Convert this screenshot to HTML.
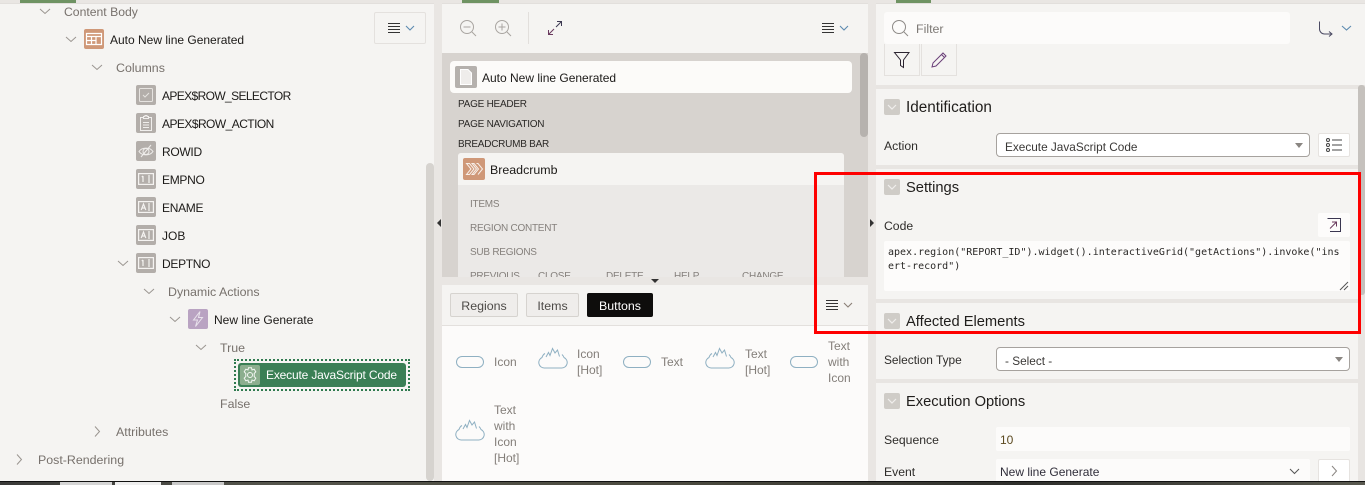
<!DOCTYPE html>
<html><head><meta charset="utf-8"><style>
html,body{margin:0;padding:0;width:1365px;height:485px;overflow:hidden;background:#e9e6e3;font-family:"Liberation Sans",sans-serif;font-size:12px;color:#262626}
div,svg,span.a{position:absolute}
.t{position:absolute;white-space:nowrap;line-height:16px;height:16px}
.g{color:#77716c;font-size:12.4px}
.k{color:#1c1a18}
.u{letter-spacing:-.3px}
.ic{position:absolute;width:20px;height:20px;border-radius:2px;background:#b3aeaa}
.cap{position:absolute;font-size:10px;letter-spacing:-.25px;white-space:nowrap;line-height:14px;color:#2b2927}
.cap2{position:absolute;font-size:10px;letter-spacing:-.25px;white-space:nowrap;line-height:14px;color:#85807c}
.sep{position:absolute;left:876px;width:482px;height:4px;background:#e8e5e2}
.box{position:absolute;width:16px;height:16px;background:#cfccc7;border-radius:2px}
.h{position:absolute;font-size:14.7px;line-height:18px;white-space:nowrap;color:#1f1d1b;left:906px}
.l{position:absolute;left:884px;font-size:12.2px;line-height:16px;white-space:nowrap;color:#2e2c2a}
.sel{position:absolute;background:#fff;border:1px solid #a6a29e;border-radius:4px;box-sizing:border-box;height:24px;font-size:11.8px;line-height:27px;padding-left:8px;color:#3a3836;white-space:nowrap}
.btn{position:absolute;background:#fcfbfa;border-radius:2px}
.gl{position:absolute;font-size:12px;line-height:16px;color:#837e79;white-space:nowrap}
svg{overflow:visible;fill:none}
</style></head><body>

<!-- panels -->
<div style="left:0;top:3px;width:434px;height:478px;background:#f5f4f2;border-top:1px solid #e2dfdc;box-sizing:border-box"></div>
<div style="left:442px;top:3px;width:426px;height:50px;background:#f5f4f2;border-top:1px solid #e2dfdc;box-sizing:border-box"></div>
<div style="left:876px;top:3px;width:489px;height:478px;background:#f5f4f2;border-top:1px solid #e2dfdc;box-sizing:border-box"></div>
<div style="left:20px;top:0;width:56px;height:3px;background:#6f9363"></div>
<div style="left:462px;top:0;width:37px;height:3px;background:#6f9363"></div>
<div style="left:896px;top:0;width:35px;height:3px;background:#6f9363"></div>

<!-- left tree -->
<div style="left:426px;top:163px;width:8px;height:318px;background:#d6d3cf;border-radius:4px"></div>
<svg style="left:436px;top:219px" width="6" height="10"><path d="M5 0V8L1 4Z" fill="#333"/></svg>
<div class="btn" style="left:374px;top:12px;width:52px;height:32px;background:#f5f4f2;border:1px solid #e4e1de;box-sizing:border-box"></div>
<svg style="left:388px;top:23px" width="30" height="11" stroke="#333"><path d="M0 .5H12M0 3.5H12M0 6.5H12M0 9.5H12"/><path d="M18 3l4 4 4-4" stroke="#5d8bb0" stroke-width="1.1"/></svg>

<svg style="left:0;top:0" width="240" height="470" stroke="#9a9590" stroke-width="1">
<path d="M40 9l5 4.500 5-4.500M66 37l5 4.500 5-4.500M92 65l5 4.500 5-4.500M118 261l5 4.500 5-4.500M144 289l5 4.500 5-4.500M170 317l5 4.500 5-4.500M196 345l5 4.500 5-4.500M95 426.500l4.500 5-4.500 5M17 454.500l4.500 5-4.500 5"/>
</svg>
<div class="t g" style="left:64px;top:4px;font-size:12.2px">Content Body</div>
<div class="ic" style="left:84px;top:29px;background:#cf9878"></div>
<svg style="left:86px;top:33px" width="16" height="12" stroke="#fff" stroke-width="1.200"><path d="M.5 .5H15.500V11.500H.5ZM.5 3.500H15.500M.5 7.500H10M5.500 3.500V11.500M10 3.500V11.500"/></svg>
<div class="t k" style="left:110px;top:32px">Auto New line Generated</div>
<div class="t g" style="left:116px;top:60px">Columns</div>

<div class="ic" style="left:136px;top:85px"></div>
<svg style="left:139px;top:88px" width="14" height="14" stroke="#e6e3e0"><rect x=".5" y=".5" width="13" height="13" rx="1"/><path d="M4 7l2 2 4-4"/></svg>
<div class="t k" style="left:162px;top:88px;letter-spacing:-.62px">APEX$ROW_SELECTOR</div>

<div class="ic" style="left:136px;top:113px"></div>
<svg style="left:140px;top:115px" width="12" height="16" stroke="#f0eeec"><path d="M3.500 2.500H.5V15.500H11.500V2.500H8.500M3.500 3.500V1.500H5V.5H7V1.500H8.500V3.500ZM3 7.500H9M3 10H9M3 12.500H9"/></svg>
<div class="t k" style="left:162px;top:116px;letter-spacing:-.55px">APEX$ROW_ACTION</div>

<div class="ic" style="left:136px;top:141px"></div>
<svg style="left:138px;top:144px" width="16" height="14" stroke="#efedeb"><path d="M1 7.500C4 3 12 3 15 7.500 12 12 4 12 1 7.500ZM5 7.500a3 3 0 0 1 6 0 3 3 0 0 1-6 0ZM3 13L13 1"/></svg>
<div class="t k u" style="left:162px;top:144px">ROWID</div>

<div class="ic" style="left:136px;top:169px"></div>
<svg style="left:138px;top:173px" width="16" height="12" stroke="#f5f3f1" stroke-width="1.200"><rect x=".6" y=".6" width="14.800" height="10.800"/><path d="M5 3V9M3.800 4L5 3M11 2V10"/></svg>
<div class="t k u" style="left:162px;top:172px">EMPNO</div>

<div class="ic" style="left:136px;top:197px"></div>
<svg style="left:138px;top:201px" width="16" height="12" stroke="#f5f3f1" stroke-width="1.200"><rect x=".6" y=".6" width="14.800" height="10.800"/><path d="M3.200 9L5.500 3 7.800 9M4.200 7H6.800M11 2V10"/></svg>
<div class="t k u" style="left:162px;top:200px">ENAME</div>

<div class="ic" style="left:136px;top:225px"></div>
<svg style="left:138px;top:229px" width="16" height="12" stroke="#f5f3f1" stroke-width="1.200"><rect x=".6" y=".6" width="14.800" height="10.800"/><path d="M3.200 9L5.500 3 7.800 9M4.200 7H6.800M11 2V10"/></svg>
<div class="t k" style="left:162px;top:228px">JOB</div>

<div class="ic" style="left:136px;top:253px"></div>
<svg style="left:138px;top:257px" width="16" height="12" stroke="#f5f3f1" stroke-width="1.200"><rect x=".6" y=".6" width="14.800" height="10.800"/><path d="M5 3V9M3.800 4L5 3M11 2V10"/></svg>
<div class="t k u" style="left:162px;top:256px">DEPTNO</div>

<div class="t g" style="left:168px;top:284px">Dynamic Actions</div>
<div class="ic" style="left:188px;top:309px;background:#b9a3c2"></div>
<svg style="left:192px;top:311px" width="12" height="16" stroke="#e9e3ec"><path d="M8 .5L1.500 9H5.500L3.500 15.500 10.500 6.500H6.500Z"/></svg>
<div class="t k" style="left:214px;top:312px">New line Generate</div>
<div class="t g" style="left:220px;top:340px">True</div>
<div style="left:234px;top:359px;width:176px;height:32px;box-sizing:border-box;border:2px dotted #2f7a4f"></div>
<div style="left:238px;top:363px;width:168px;height:24px;background:#3a7f55;border-radius:3px"></div>
<div style="left:240px;top:365px;width:20px;height:20px;background:#8cae8e;border-radius:2px"></div>
<svg style="left:242px;top:367px" width="16" height="16" stroke="#f4f7f3"><path d="M6.500 .8H9.500L10 3 12.200 2.200 13.800 4.800 12.200 6.500 12.200 9.500 13.800 11.200 12.200 13.800 10 13 9.500 15.200H6.500L6 13 3.800 13.800 2.200 11.200 3.800 9.500V6.500L2.200 4.800 3.800 2.200 6 3Z"/><circle cx="8" cy="8" r="2.500"/></svg>
<div class="t" style="left:266px;top:367px;color:#fff;letter-spacing:-.17px">Execute JavaScript Code</div>
<div class="t g" style="left:220px;top:396px">False</div>
<div class="t g" style="left:116px;top:424px">Attributes</div>
<div class="t g" style="left:38px;top:452px;font-size:12.4px">Post-Rendering</div>

<!-- middle toolbar -->
<svg style="left:460px;top:20px" width="120" height="18" stroke="#a9a5a1" stroke-width="1"><circle cx="7" cy="7" r="6.500"/><path d="M3.500 7H10.500M12 12L16 16"/><circle cx="42" cy="7" r="6.500"/><path d="M38.500 7H45.500M42 3.500V10.500M47 12L51 16"/></svg>
<div style="left:528px;top:12px;width:1px;height:32px;background:#e2dfdc"></div>
<svg style="left:548px;top:21px" width="14" height="14"><path d="M8 6L13 1M9 .5H13.500V5" stroke="#3d3a52"/><path d="M6 8L1 13M.5 9V13.500H5" stroke="#6a3a5e"/></svg>
<svg style="left:822px;top:23px" width="30" height="11" stroke="#333"><path d="M0 .5H12M0 3.500H12M0 6.500H12M0 9.500H12"/><path d="M18 3l4 4 4-4" stroke="#5d8bb0" stroke-width="1.100"/></svg>

<!-- canvas -->
<div style="left:442px;top:53px;width:426px;height:224px;background:#d7d3cf;overflow:hidden">
  <div style="left:418px;top:0;width:8px;height:84px;background:#b6b2ae;border-radius:4px"></div>
  <div style="left:8px;top:8px;width:402px;height:32px;background:#fcfbf9;border-radius:4px"></div>
  <div style="left:13px;top:13px;width:22px;height:22px;background:#b5b1ad;border-radius:2px"></div>
  <svg style="left:18px;top:16px" width="12" height="16"><path d="M.5 .5H8L11.500 4V15.500H.5Z" fill="#efedeb" stroke="#fff"/></svg>
  <div class="t k" style="left:40px;top:17px">Auto New line Generated</div>
  <div class="cap" style="left:16px;top:45px">PAGE HEADER</div>
  <div class="cap" style="left:16px;top:65px">PAGE NAVIGATION</div>
  <div class="cap" style="left:16px;top:85px">BREADCRUMB BAR</div>
  <div style="left:16px;top:100px;width:386px;height:130px;background:#ebe9e7;border-radius:3px"></div>
  <div style="left:16px;top:100px;width:386px;height:32px;background:#f5f4f2;border-radius:3px 3px 0 0"></div>
  <div style="left:21px;top:105px;width:22px;height:22px;background:#cf9878;border-radius:2px"></div>
  <svg style="left:24px;top:110px" width="17" height="12" stroke="#f7efe9"><path d="M.5 .5H3.500L8 6 3.500 11.500H.5L5 6ZM6 .5H8L12.500 6 8 11.500H6L10.500 6ZM10.500 .5H12L16.500 6 12 11.500"/></svg>
  <div class="t k" style="left:48px;top:109px;font-size:12.4px">Breadcrumb</div>
  <div class="cap2" style="left:28px;top:145px">ITEMS</div>
  <div class="cap2" style="left:28px;top:169px">REGION CONTENT</div>
  <div class="cap2" style="left:28px;top:193px">SUB REGIONS</div>
  <div class="cap2" style="left:28px;top:217px">PREVIOUS</div>
  <div class="cap2" style="left:96px;top:217px">CLOSE</div>
  <div class="cap2" style="left:164px;top:217px">DELETE</div>
  <div class="cap2" style="left:232px;top:217px">HELP</div>
  <div class="cap2" style="left:300px;top:217px">CHANGE</div>
</div>
<svg style="left:651px;top:279px" width="10" height="6"><path d="M0 0H8L4 4Z" fill="#333"/></svg>
<svg style="left:869px;top:219px" width="6" height="10"><path d="M1 0V8L5 4Z" fill="#333"/></svg>

<!-- gallery -->
<div style="left:442px;top:285px;width:426px;height:41px;background:#f5f4f2;border-bottom:1px solid #e3e0dd;box-sizing:border-box"></div>
<div style="left:442px;top:326px;width:426px;height:155px;background:#fcfbfa"></div>
<div style="left:450px;top:293px;width:68px;height:24px;box-sizing:border-box;border:1px solid #d6d3cf;border-radius:2px;background:#efedeb;text-align:center;line-height:24px;color:#4d4a47;font-size:12.4px">Regions</div>
<div style="left:526px;top:293px;width:53px;height:24px;box-sizing:border-box;border:1px solid #d6d3cf;border-radius:2px;background:#efedeb;text-align:center;line-height:24px;color:#4d4a47;font-size:12.4px">Items</div>
<div style="left:587px;top:293px;width:66px;height:24px;border-radius:2px;background:#0e0d0c;text-align:center;line-height:27px;color:#fff;font-size:12.4px">Buttons</div>
<svg style="left:826px;top:300px" width="30" height="11" stroke="#333"><path d="M0 .5H12M0 3.500H12M0 6.500H12M0 9.500H12"/><path d="M18 3l4 4 4-4" stroke="#8a7f76" stroke-width="1.100"/></svg>

<svg style="left:456px;top:350px" width="400" height="110" stroke="#8fb0c2" stroke-width="1">
<rect x=".5" y="6.500" width="27" height="11" rx="5.500"/>
<rect x="167.500" y="6.500" width="27" height="11" rx="5.500"/>
<rect x="334.500" y="6.500" width="27" height="11" rx="5.500"/>
<g><path d="M88.500 18H105.500A5.500 5.500 0 0 0 108 7.500Q107.500 6 106 4.500M88.500 18A5.500 5.500 0 0 1 86 7.500Q87 4.500 89 3.500"/><path d="M90 7L92.500 2.500 94 5.500 96.500 -1.500 99 3 101.500 0 103.500 6.500"/></g>
<g transform="translate(167 0)"><path d="M88.500 18H105.500A5.500 5.500 0 0 0 108 7.500Q107.500 6 106 4.500M88.500 18A5.500 5.500 0 0 1 86 7.500Q87 4.500 89 3.500"/><path d="M90 7L92.500 2.500 94 5.500 96.500 -1.500 99 3 101.500 0 103.500 6.500"/></g>
<g transform="translate(-83 72)"><path d="M88.500 18H105.500A5.500 5.500 0 0 0 108 7.500Q107.500 6 106 4.500M88.500 18A5.500 5.500 0 0 1 86 7.500Q87 4.500 89 3.500"/><path d="M90 7L92.500 2.500 94 5.500 96.500 -1.500 99 3 101.500 0 103.500 6.500"/></g>
</svg>
<div class="gl" style="left:494px;top:354px">Icon</div>
<div class="gl" style="left:577px;top:346px">Icon<br>[Hot]</div>
<div class="gl" style="left:661px;top:354px">Text</div>
<div class="gl" style="left:745px;top:346px">Text<br>[Hot]</div>
<div class="gl" style="left:828px;top:338px">Text<br>with<br>Icon</div>
<div class="gl" style="left:494px;top:402px">Text<br>with<br>Icon<br>[Hot]</div>

<!-- right panel -->
<div class="btn" style="left:884px;top:12px;width:406px;height:32px;border-radius:3px"></div>
<svg style="left:892px;top:20px" width="18" height="18" stroke="#8d8a87"><circle cx="7" cy="7" r="6.500"/><path d="M12 12L16 16"/></svg>
<div class="t" style="left:916px;top:21px;color:#7d7975;font-size:12.4px">Filter</div>
<svg style="left:1319px;top:21px" width="36" height="15"><path d="M.5 .5V8a5 5 0 0 0 5 5H13M10 10.500L13 13 10 15.500" stroke="#4b4a63"/><path d="M23 5l4.500 4 4.500-4" stroke="#5d8bb0" stroke-width="1.100"/></svg>
<div style="left:884px;top:44px;width:36px;height:32px;box-sizing:border-box;border:1px solid #e4e1de;border-top:0"></div>
<div style="left:921px;top:44px;width:36px;height:32px;box-sizing:border-box;border:1px solid #e4e1de;border-top:0"></div>
<svg style="left:894px;top:52px" width="16" height="16"><path d="M.5 .5H15L9.500 8V15.500L6.500 13.500V8Z" stroke="#2b2430"/></svg>
<svg style="left:931px;top:52px" width="16" height="16"><path d="M1 15L2 11 12 1 15 4 5 14ZM10.500 2.500L13.500 5.500" stroke="#6a3f78"/></svg>

<div class="sep" style="top:85px"></div>
<div class="sep" style="top:165px"></div>
<div class="sep" style="top:299px"></div>
<div class="sep" style="top:379px"></div>
<div style="left:1358px;top:85px;width:7px;height:396px;background:#e8e5e2"></div>
<div style="left:1358px;top:85px;width:7px;height:210px;background:#c5c1bd;border-radius:3px"></div>

<div class="box" style="left:884px;top:99px"></div>
<div class="box" style="left:884px;top:179px"></div>
<div class="box" style="left:884px;top:313px"></div>
<div class="box" style="left:884px;top:393px"></div>
<svg style="left:884px;top:99px" width="16" height="310" stroke="#f0eeec" stroke-width="1.200"><path d="M4 6l4 4 4-4M4 86l4 4 4-4M4 220l4 4 4-4M4 300l4 4 4-4"/></svg>
<div class="h" style="top:99px;font-size:15.3px">Identification</div>
<div class="h" style="top:179px">Settings</div>
<div class="h" style="top:313px">Affected Elements</div>
<div class="h" style="top:393px">Execution Options</div>

<div class="l" style="top:138px">Action</div>
<div class="sel" style="left:996px;top:133px;width:314px">Execute JavaScript Code</div>
<svg style="left:1295px;top:143px" width="10" height="6"><path d="M0 0H8L4 5Z" fill="#8a8682"/></svg>
<div class="btn" style="left:1318px;top:133px;width:32px;height:24px;background:#fff;border:1px solid #e6e3e0;box-sizing:border-box"></div>
<svg style="left:1326px;top:138px" width="18" height="14" stroke="#444"><circle cx="2" cy="2" r="1.500"/><circle cx="2" cy="7" r="1.500"/><circle cx="2" cy="12" r="1.500"/><path d="M6 2H16M6 7H16M6 12H16"/></svg>

<div class="l" style="top:218px">Code</div>
<div class="btn" style="left:1318px;top:213px;width:32px;height:24px;background:#fdfcfb"></div>
<svg style="left:1327px;top:218px" width="14" height="14"><path d="M.5 .5H13.500V13.500H3" stroke="#3a3650"/><path d="M3 10.500L9 4.500M5 4H9.500V8.500" stroke="#6a3a5e"/></svg>
<div style="left:884px;top:241px;width:466px;height:50px;background:#fdfcfb;border-radius:2px"></div>
<div style="left:888px;top:246px;font-family:'DejaVu Sans Mono','Liberation Mono',monospace;font-size:10px;line-height:14px;color:#2a2826;white-space:pre">apex.region("REPORT_ID").widget().interactiveGrid("getActions").invoke("ins
ert-record")</div>
<svg style="left:1340px;top:282px" width="9" height="9" stroke="#555"><path d="M0 8L8 0M4 8L8 4"/></svg>

<div class="l" style="top:352px;font-size:11.9px">Selection Type</div>
<div class="sel" style="left:996px;top:347px;width:354px">- Select -</div>
<svg style="left:1335px;top:357px" width="10" height="6"><path d="M0 0H8L4 5Z" fill="#8a8682"/></svg>

<div class="l" style="top:432px">Sequence</div>
<div class="btn" style="left:996px;top:427px;width:354px;height:24px;line-height:27px;padding-left:4px;box-sizing:border-box;color:#5c4a20">10</div>
<div class="l" style="top:464px">Event</div>
<div class="btn" style="left:996px;top:459px;width:314px;height:24px;line-height:26px;padding-left:4px;box-sizing:border-box;color:#302e3a">New line Generate</div>
<svg style="left:1289px;top:468px" width="12" height="7"><path d="M1 1l4.500 4.500L10 1" stroke="#555"/></svg>
<div class="btn" style="left:1318px;top:459px;width:32px;height:24px;background:#fff;border:1px solid #e6e3e0;box-sizing:border-box"></div>
<svg style="left:1331px;top:465px" width="7" height="12"><path d="M1 1l4.500 5L1 11" stroke="#8a8682"/></svg>

<!-- red highlight -->
<div style="left:814px;top:172px;width:547px;height:162px;box-sizing:border-box;border:3px solid #fe0000"></div>

<!-- taskbar strip -->
<div style="left:0;top:481px;width:1365px;height:4px;background:linear-gradient(90deg,#3a3a38,#55554c 20%,#4b4a3f 50%,#2f2f2c 75%,#59594f);border-top:1px solid #111;box-sizing:border-box"></div>
<div style="left:60px;top:482px;width:52px;height:3px;background:#d5d5d5"></div>
<div style="left:115px;top:482px;width:46px;height:3px;background:#eee"></div>
<div style="left:172px;top:482px;width:52px;height:3px;background:#c9c9c9"></div>
</body></html>
